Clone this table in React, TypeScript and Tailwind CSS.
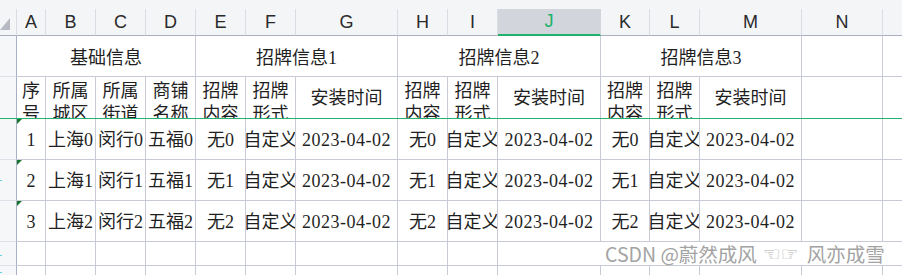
import React from "react";

type Col = { key: string; w: string };

// sheet columns, widths include the right grid line
const cols: Col[] = [
  { key: "A", w: "w-[29px]" },
  { key: "B", w: "w-[50px]" },
  { key: "C", w: "w-[50px]" },
  { key: "D", w: "w-[50px]" },
  { key: "E", w: "w-[50px]" },
  { key: "F", w: "w-[50px]" },
  { key: "G", w: "w-[102px]" },
  { key: "H", w: "w-[50px]" },
  { key: "I", w: "w-[50px]" },
  { key: "J", w: "w-[103px]" },
  { key: "K", w: "w-[49px]" },
  { key: "L", w: "w-[50px]" },
  { key: "M", w: "w-[102px]" },
  { key: "N", w: "w-[81px]" },
];

const groups = [
  { title: "基础信息", w: "w-[179px]" },
  { title: "招牌信息1", w: "w-[202px]" },
  { title: "招牌信息2", w: "w-[203px]" },
  { title: "招牌信息3", w: "w-[201px]" },
  { title: "", w: "w-[81px]" },
];

const fields: string[][] = [
  ["序", "号"],
  ["所属", "城区"],
  ["所属", "街道"],
  ["商铺", "名称"],
  ["招牌", "内容"],
  ["招牌", "形式"],
  ["安装时间"],
  ["招牌", "内容"],
  ["招牌", "形式"],
  ["安装时间"],
  ["招牌", "内容"],
  ["招牌", "形式"],
  ["安装时间"],
  [],
];

const rows = [0, 1, 2].map((i) => [
  String(i + 1),
  `上海${i}`,
  `闵行${i}`,
  `五福${i}`,
  `无${i}`,
  "自定义",
  "2023-04-02",
  `无${i}`,
  "自定义",
  "2023-04-02",
  `无${i}`,
  "自定义",
  "2023-04-02",
  "",
]);

const grid = "border-r border-b border-[#c8cbd6]";
const rowHead =
  "w-[17px] shrink-0 bg-[#f6f7f9] border-r border-r-[#aab0c4] border-b border-b-[#dfe2e8]";

const TextMark = () => (
  <svg width="5" height="5" viewBox="0 0 5 5" className="absolute left-0 top-0">
    <polygon points="0,0 5,0 0,5" fill="#17752f" />
  </svg>
);

export default function App() {
  return (
    <div className="relative w-[902px] h-[275px] overflow-hidden bg-white font-['Liberation_Serif','Noto_Sans_CJK_SC',serif] text-[18px] text-[#1f1f1f]">
      {/* column letters */}
      <div className="flex h-[36px] bg-[#f4f5f7] font-['Liberation_Sans','Noto_Sans_CJK_SC',sans-serif] text-[18px] text-[#2a2a2a]">
        <div className="relative w-[17px] shrink-0 mt-[9px] h-[27px] border-r border-r-[#d9dce3] border-b border-b-[#a9afc2]">
          <svg width="10" height="12" viewBox="0 0 10 12" className="absolute left-0 top-[9px]">
            <polygon points="10,0 10,12 0,12" fill="#b7bac2" />
          </svg>
        </div>
        {cols.map((c) =>
          c.key === "J" ? (
            <div
              key={c.key}
              className={`${c.w} shrink-0 mt-[9px] h-[27px] flex items-center justify-center bg-[#d3d5dc] border-r border-r-[#d3d5dc] border-b-2 border-b-[#20b26c] text-[#20b26c]`}
            >
              {c.key}
            </div>
          ) : (
            <div
              key={c.key}
              className={`${c.w} shrink-0 mt-[9px] h-[27px] flex items-center justify-center border-r border-r-[#d9dce3] border-b border-b-[#a9afc2]`}
            >
              {c.key}
            </div>
          )
        )}
        <div className="flex-1 mt-[9px] h-[27px] border-b border-b-[#a9afc2]" />
      </div>

      {/* group titles */}
      <div className="flex h-[41px]">
        <div className={rowHead} />
        {groups.map((g, i) => (
          <div key={i} className={`${g.w} shrink-0 flex items-center justify-center pt-[5px] ${grid}`}>
            {g.title}
          </div>
        ))}
        <div className="flex-1 border-b border-[#c8cbd6]" />
      </div>

      {/* field names, cut by the frozen pane */}
      <div className="flex h-[41px]">
        <div className="w-[17px] shrink-0 bg-[#f6f7f9] border-r border-r-[#aab0c4]" />
        {cols.map((c, i) => (
          <div
            key={c.key}
            className={`${c.w} shrink-0 overflow-hidden border-r border-[#c8cbd6] flex flex-col items-center leading-[23px] ${
              fields[i].length > 1 ? "pt-[3px]" : "pt-[10px]"
            }`}
          >
            {fields[i].map((t, j) => (
              <span key={j} className="whitespace-nowrap">
                {t}
              </span>
            ))}
          </div>
        ))}
        <div className="flex-1" />
      </div>

      <div className="h-[1px] bg-[#23b36e]" />

      {/* data */}
      {rows.map((r, ri) => (
        <div key={ri} className="flex h-[41px]">
          <div className={rowHead} />
          {cols.map((c, i) => (
            <div
              key={c.key}
              className={`relative ${c.w} shrink-0 overflow-hidden flex items-center justify-center pt-[3px] whitespace-nowrap ${grid}`}
            >
              {i === 0 && <TextMark />}
              <span className={r[i].includes("-") ? "tracking-[0.5px]" : ""}>{r[i]}</span>
            </div>
          ))}
          <div className="flex-1 border-b border-[#c8cbd6]" />
        </div>
      ))}

      {[0, 1].map((ri) => (
        <div key={ri} className="flex h-[24px]">
          <div className={rowHead} />
          {cols.map((c) => (
            <div key={c.key} className={`${c.w} shrink-0 ${grid}`} />
          ))}
          <div className="flex-1 border-b border-[#c8cbd6]" />
        </div>
      ))}

      <span className="absolute left-0 top-[180px] w-[2px] h-[1px] bg-[#5fd0e6]" />
      <span className="absolute left-0 top-[255px] w-[2px] h-[1px] bg-[#5fd0e6]" />
      <span className="absolute left-0 top-[272px] w-[2px] h-[1px] bg-[#5fd0e6]" />

      {/* watermark */}
      <div className="absolute left-[599px] top-[242px] w-[290px] h-[23px] bg-white flex items-center pl-[6px] font-['Noto_Sans_CJK_SC',sans-serif] text-[19.5px] leading-none text-[#a3a3a3] whitespace-nowrap">
        <span>CSDN @蔚然成风</span>
        <span className="ml-[6px] mr-[8px] font-['DejaVu_Sans',sans-serif] text-[20px] text-[#b0b0b0]">☜☞</span>
        <span>风亦成雪</span>
      </div>
    </div>
  );
}
